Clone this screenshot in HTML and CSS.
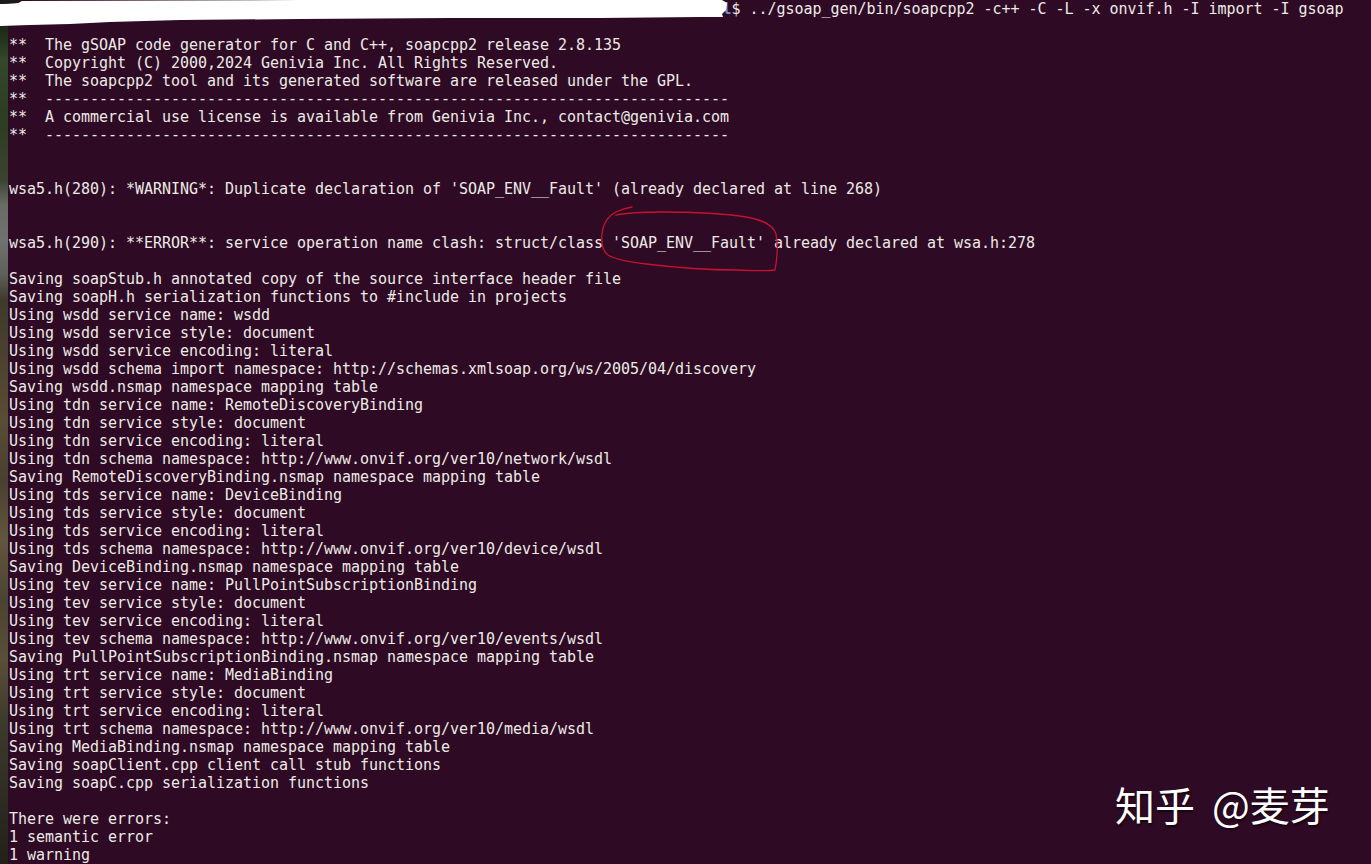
FILE: index.html
```html
<!DOCTYPE html>
<html lang="en">
<head>
<meta charset="utf-8">
<title>soapcpp2 output</title>
<link rel="stylesheet" href="styles.css">
</head>
<body>
<div class="screen">
  <div class="desktop-edge"></div>
  <pre class="terminal"><span class="prompt-gap"></span><span class="prompt-path">l</span>$ ../gsoap_gen/bin/soapcpp2 -c++ -C -L -x onvif.h -I import -I gsoap

**  The gSOAP code generator for C and C++, soapcpp2 release 2.8.135
**  Copyright (C) 2000,2024 Genivia Inc. All Rights Reserved.
**  The soapcpp2 tool and its generated software are released under the GPL.
**  ----------------------------------------------------------------------------
**  A commercial use license is available from Genivia Inc., contact@genivia.com
**  ----------------------------------------------------------------------------


wsa5.h(280): *WARNING*: Duplicate declaration of 'SOAP_ENV__Fault' (already declared at line 268)


wsa5.h(290): **ERROR**: service operation name clash: struct/class 'SOAP_ENV__Fault' already declared at wsa.h:278

Saving soapStub.h annotated copy of the source interface header file
Saving soapH.h serialization functions to #include in projects
Using wsdd service name: wsdd
Using wsdd service style: document
Using wsdd service encoding: literal
Using wsdd schema import namespace: http://schemas.xmlsoap.org/ws/2005/04/discovery
Saving wsdd.nsmap namespace mapping table
Using tdn service name: RemoteDiscoveryBinding
Using tdn service style: document
Using tdn service encoding: literal
Using tdn schema namespace: http://www.onvif.org/ver10/network/wsdl
Saving RemoteDiscoveryBinding.nsmap namespace mapping table
Using tds service name: DeviceBinding
Using tds service style: document
Using tds service encoding: literal
Using tds schema namespace: http://www.onvif.org/ver10/device/wsdl
Saving DeviceBinding.nsmap namespace mapping table
Using tev service name: PullPointSubscriptionBinding
Using tev service style: document
Using tev service encoding: literal
Using tev schema namespace: http://www.onvif.org/ver10/events/wsdl
Saving PullPointSubscriptionBinding.nsmap namespace mapping table
Using trt service name: MediaBinding
Using trt service style: document
Using trt service encoding: literal
Using trt schema namespace: http://www.onvif.org/ver10/media/wsdl
Saving MediaBinding.nsmap namespace mapping table
Saving soapClient.cpp client call stub functions
Saving soapC.cpp serialization functions

There were errors:
1 semantic error
1 warning</pre>

  <svg class="redact" width="732" height="28" viewBox="0 0 732 28" aria-hidden="true">
    <path d="M0 4 L18 3 L22 1 L300 0 L722 0 L727 3 L726 10 L722 14 L723 17 L700 17 L600 18 L450 18 L300 19 L180 20 L110 22 L70 24 L30 25 L0 26 Z" fill="#ffffff"/>
    <path d="M0 0 L22 0 L18 3 L0 4 Z" fill="#1a1a1a"/>
  </svg>

  <svg class="scribble" width="190" height="74" viewBox="0 0 190 74" aria-hidden="true">
    <path d="M36 3 C30 4 24 6 20 8 C12 12 7 20 6 30 C5 40 7 47 12 51 C20 56 35 58 50 60 C75 63 110 66 140 66 C160 67 172 67 179 66 C181 55 182 40 180 30 C177 21 168 16 150 13 C125 9 95 8 65 8 C45 8 30 9 20 11" fill="none" stroke="#c4122e" stroke-width="1.3" stroke-linecap="round"/>
  </svg>

  <div class="watermark"><span>知乎</span><span>@麦芽</span></div>
</div>
</body>
</html>
```

FILE: styles.css
```css
html, body {
  margin: 0;
  padding: 0;
  background: #2f0a24;
}

.screen {
  position: relative;
  width: 1371px;
  height: 864px;
  overflow: hidden;
  display: flex;
  flex-direction: row;
  background: #2f0a24;
}

.desktop-edge {
  flex: 0 0 8px;
  height: 100%;
  background: linear-gradient(180deg,
    #151c10 0px, #1e2b15 30px, #34482a 60px, #2c3d22 120px,
    #3a4431 180px, #6a6c66 205px, #707270 240px, #5d5f58 275px,
    #3e3a2a 300px, #4d4230 360px, #5a4d36 420px, #4a4030 480px,
    #62563e 540px, #4b4331 600px, #5a4f38 660px, #3e3a2c 720px,
    #2e2c22 800px, #232018 864px);
}

.terminal {
  flex: 1 1 auto;
  margin: 0;
  padding: 0 0 0 1px;
  font-family: "DejaVu Sans Mono", "Liberation Mono", monospace;
  font-size: 15px;
  letter-spacing: -0.03px;
  line-height: 18px;
  color: #eceae6;
  white-space: pre;
  background: #2f0a24;
}

.prompt-gap {
  display: inline-block;
  width: 79ch;
}

.prompt-path {
  color: #6f8fd6;
  font-weight: bold;
}

.redact {
  position: absolute;
  left: 0;
  top: 0;
}

.scribble {
  position: absolute;
  left: 596px;
  top: 204px;
}

.watermark {
  position: absolute;
  left: 1115px;
  top: 777px;
  display: flex;
  gap: 17px;
  font-family: "Noto Sans CJK SC", "Noto Sans", sans-serif;
  font-size: 40px;
  font-weight: 400;
  line-height: 54px;
  color: #ffffff;
  text-shadow: 1px 2px 2px rgba(0, 0, 0, 0.55);
  white-space: nowrap;
}
```
